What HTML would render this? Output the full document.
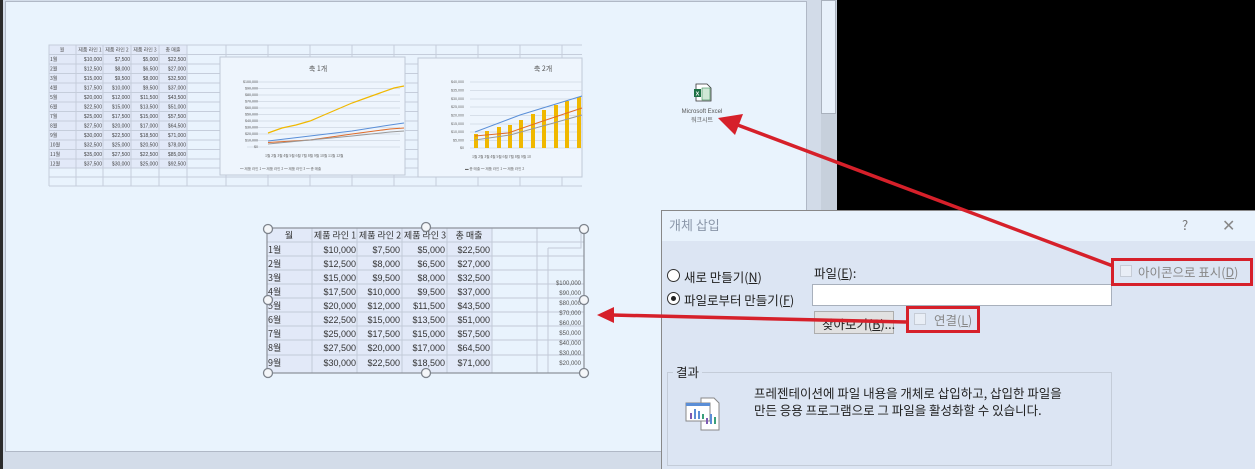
<!DOCTYPE html>
<html><head><meta charset="utf-8">
<style>
*{margin:0;padding:0;box-sizing:border-box}
body{width:1255px;height:469px;overflow:hidden;background:#d3dce9;position:relative;font-family:"Liberation Sans","Noto Sans CJK KR",sans-serif}
.a{position:absolute}
.t{font-family:"Noto Sans CJK KR","Liberation Sans",sans-serif;color:#222;font-size:12.5px;white-space:nowrap}
</style></head><body>
<div class="a" style="left:0;top:0;width:3px;height:469px;background:#2b2b2b"></div>
<div class="a" style="left:5px;top:1px;width:802px;height:451px;background:#e9f3fd;border:1px solid #b0b8c6"></div>
<div class="a" style="left:807px;top:0;width:14px;height:452px;background:#d2dbe8"></div>
<div class="a" style="left:821px;top:0;width:16px;height:210px;background:#c7d0dc"></div>
<div class="a" style="left:821px;top:0;width:15px;height:114px;background:#e8f1fb;border:1px solid #a9b1bd"></div>
<div class="a" style="left:837px;top:0;width:418px;height:210px;background:#000"></div>

<svg class="a" style="left:0;top:0" width="1255" height="469" font-family="Liberation Sans,Noto Sans CJK KR,sans-serif">
<g stroke="#c5cddb" stroke-width="1" fill="none">
<rect x="49" y="45" width="138" height="123" fill="#e2e9f8"/>
<path d="M49 45H582M49 54.5H582M49 64H582M49 73.5H582M49 83H582M49 92.5H582M49 102H582M49 111.5H582M49 121H582M49 130.5H582M49 140H582M49 149.5H582M49 159H582M49 168H582M49 177H582M49 186H582"/>
<path d="M49 45V186M76 45V186M103 45V186M131 45V186M159 45V186M187 45V186M226 45V186M268 45V186M310 45V186M352 45V186M394 45V186M436 45V186M478 45V186M520 45V186M562 45V186"/>
</g>
<g font-size="5" fill="#555" font-family="Noto Sans CJK KR,sans-serif">
<text x="62" y="51.5" text-anchor="middle">월</text><text x="90" y="51.5" text-anchor="middle">제품 라인 1</text><text x="117" y="51.5" text-anchor="middle">제품 라인 2</text><text x="145" y="51.5" text-anchor="middle">제품 라인 3</text><text x="173" y="51.5" text-anchor="middle">총 매출</text>
</g>
<g font-size="5" fill="#444" font-family="Noto Sans CJK KR,sans-serif">
<text x="50" y="61">1월</text><text x="50" y="70.5">2월</text><text x="50" y="80">3월</text><text x="50" y="89.5">4월</text><text x="50" y="99">5월</text><text x="50" y="108.5">6월</text><text x="50" y="118">7월</text><text x="50" y="127.5">8월</text><text x="50" y="137">9월</text><text x="50" y="146.5">10월</text><text x="50" y="156">11월</text><text x="50" y="165.5">12월</text>
</g>
<g font-size="5" fill="#444" text-anchor="end">
<text x="102" y="61">$10,000</text><text x="130" y="61">$7,500</text><text x="158" y="61">$5,000</text><text x="186" y="61">$22,500</text>
<text x="102" y="70.5">$12,500</text><text x="130" y="70.5">$8,000</text><text x="158" y="70.5">$6,500</text><text x="186" y="70.5">$27,000</text>
<text x="102" y="80">$15,000</text><text x="130" y="80">$9,500</text><text x="158" y="80">$8,000</text><text x="186" y="80">$32,500</text>
<text x="102" y="89.5">$17,500</text><text x="130" y="89.5">$10,000</text><text x="158" y="89.5">$9,500</text><text x="186" y="89.5">$37,000</text>
<text x="102" y="99">$20,000</text><text x="130" y="99">$12,000</text><text x="158" y="99">$11,500</text><text x="186" y="99">$43,500</text>
<text x="102" y="108.5">$22,500</text><text x="130" y="108.5">$15,000</text><text x="158" y="108.5">$13,500</text><text x="186" y="108.5">$51,000</text>
<text x="102" y="118">$25,000</text><text x="130" y="118">$17,500</text><text x="158" y="118">$15,000</text><text x="186" y="118">$57,500</text>
<text x="102" y="127.5">$27,500</text><text x="130" y="127.5">$20,000</text><text x="158" y="127.5">$17,000</text><text x="186" y="127.5">$64,500</text>
<text x="102" y="137">$30,000</text><text x="130" y="137">$22,500</text><text x="158" y="137">$18,500</text><text x="186" y="137">$71,000</text>
<text x="102" y="146.5">$32,500</text><text x="130" y="146.5">$25,000</text><text x="158" y="146.5">$20,500</text><text x="186" y="146.5">$78,000</text>
<text x="102" y="156">$35,000</text><text x="130" y="156">$27,500</text><text x="158" y="156">$22,500</text><text x="186" y="156">$85,000</text>
<text x="102" y="165.5">$37,500</text><text x="130" y="165.5">$30,000</text><text x="158" y="165.5">$25,000</text><text x="186" y="165.5">$92,500</text>
</g>
<rect x="220" y="57" width="185" height="118" fill="#eef5fd" stroke="#c0c9d6"/>
<text x="318" y="71" font-size="7" fill="#555" text-anchor="middle" font-family="Noto Sans CJK KR,sans-serif">축 1개</text>
<g stroke="#d0d7e2" stroke-width="0.8"><path d="M247 82H400M247 88.5H400M247 95H400M247 101.5H400M247 108H400M247 114.5H400M247 121H400M247 127.5H400M247 134H400M247 140.5H400M247 147H400"/></g>
<g font-size="3.6" fill="#666" text-anchor="end"><text x="258" y="83">$100,000</text><text x="258" y="89.5">$90,000</text><text x="258" y="96">$80,000</text><text x="258" y="102.5">$70,000</text><text x="258" y="109">$60,000</text><text x="258" y="115.5">$50,000</text><text x="258" y="122">$40,000</text><text x="258" y="128.5">$30,000</text><text x="258" y="135">$20,000</text><text x="258" y="141.5">$10,000</text><text x="258" y="148">$0</text></g>
<polyline fill="none" stroke="#f0b800" stroke-width="1.2" points="268,133 282,128 296,125 310,121 324,115 338,109 352,103 366,98 380,93 394,88 404,86"/>
<polyline fill="none" stroke="#5a8fd8" stroke-width="1" points="268,141 310,136 352,131 390,125 404,123"/>
<polyline fill="none" stroke="#e06c2a" stroke-width="1" points="268,142.5 310,140 352,134 390,129 404,128"/>
<polyline fill="none" stroke="#999" stroke-width="1" points="268,144 310,140 352,136 390,132 404,131"/>
<g font-size="3.6" fill="#666" font-family="Noto Sans CJK KR,sans-serif"><text x="265" y="157">1월 2월 3월 4월 5월 6월 7월 8월 9월 10월 11월 12월</text>
<text x="240" y="170">━ 제품 라인 1   ━ 제품 라인 2   ━ 제품 라인 3   ━ 총 매출</text></g>
<rect x="418" y="58" width="164" height="119" fill="#eef5fd" stroke="#c0c9d6"/>
<text x="543" y="71" font-size="7" fill="#555" text-anchor="middle" font-family="Noto Sans CJK KR,sans-serif">축 2개</text>
<g stroke="#d0d7e2" stroke-width="0.8"><path d="M470 82H582M470 90.5H582M470 99H582M470 107H582M470 115.5H582M470 124H582M470 132H582M470 140.5H582M470 148H582"/></g>
<g font-size="3.6" fill="#666" text-anchor="end"><text x="464" y="83">$40,000</text><text x="464" y="91.5">$35,000</text><text x="464" y="100">$30,000</text><text x="464" y="108">$25,000</text><text x="464" y="116.5">$20,000</text><text x="464" y="125">$15,000</text><text x="464" y="133">$10,000</text><text x="464" y="141.5">$5,000</text><text x="464" y="149">$0</text></g>
<g fill="#f0b800"><rect x="474" y="134" width="4" height="14"/><rect x="485" y="131" width="4" height="17"/><rect x="497" y="127" width="4" height="21"/><rect x="508" y="125" width="4" height="23"/><rect x="519" y="120" width="4" height="28"/><rect x="531" y="114" width="4" height="34"/><rect x="542" y="110" width="4" height="38"/><rect x="554" y="105" width="4" height="43"/><rect x="565" y="101" width="4" height="47"/><rect x="577" y="97" width="4" height="51"/></g>
<polyline fill="none" stroke="#5a8fd8" stroke-width="1" points="475,132 520,115 582,96"/>
<polyline fill="none" stroke="#e06c2a" stroke-width="1" points="475,136 508,133 540,122 582,108"/>
<polyline fill="none" stroke="#999" stroke-width="1" points="475,140 510,135 550,124 582,115"/>
<g font-size="3.6" fill="#666" font-family="Noto Sans CJK KR,sans-serif"><text x="472" y="158">1월 2월 3월 4월 5월 6월 7월 8월 9월 10</text>
<text x="465" y="170">▬ 총 매출   ━ 제품 라인 1   ━ 제품 라인 2</text></g>

<path d="M696 84H707L711 88V101H696Z" fill="#fff" stroke="#333" stroke-width="0.8"/>
<rect x="702" y="88" width="8" height="12" fill="#cfe8d6" stroke="#3b8b55" stroke-width="0.6"/>
<rect x="694" y="89" width="7" height="8" fill="#1e7145"/>
<text x="697.5" y="95.5" font-size="5.5" fill="#fff" text-anchor="middle" font-weight="bold">X</text>
<text x="702" y="113" font-size="6" fill="#555" text-anchor="middle">Microsoft Excel</text>
<text x="702" y="122" font-size="6" fill="#555" text-anchor="middle" font-family="Noto Sans CJK KR,sans-serif">워크시트</text>

<rect x="267" y="228" width="225" height="145" fill="#e2e9f8"/>
<g stroke="#c2cad8" stroke-width="1" fill="none">
<path d="M267 242H584M267 256H584M267 270H584M267 284H584M267 298H584M267 312H584M267 326H584M267 340H584M267 355H584"/>
<path d="M312 228V373M357 228V373M402 228V373M447 228V373M492 228V373M537 228V373M548 248V373M548 248H581V228"/>
</g>
<rect x="267" y="228" width="317" height="145" fill="none" stroke="#8a8f98" stroke-width="1.2"/>
<g font-size="9" fill="#333" font-family="Noto Sans CJK KR,sans-serif"><text x="289" y="238.5" text-anchor="middle">월</text><text x="335" y="238.5" text-anchor="middle">제품 라인 1</text><text x="380" y="238.5" text-anchor="middle">제품 라인 2</text><text x="425" y="238.5" text-anchor="middle">제품 라인 3</text><text x="469" y="238.5" text-anchor="middle">총 매출</text>
<text x="268" y="253">1월</text><text x="268" y="267">2월</text><text x="268" y="281">3월</text><text x="268" y="295">4월</text><text x="268" y="309">5월</text><text x="268" y="323">6월</text><text x="268" y="337">7월</text><text x="268" y="351">8월</text><text x="268" y="366">9월</text></g>
<g font-size="9" fill="#333" text-anchor="end">
<text x="356" y="253">$10,000</text><text x="400" y="253">$7,500</text><text x="445" y="253">$5,000</text><text x="490" y="253">$22,500</text>
<text x="356" y="267">$12,500</text><text x="400" y="267">$8,000</text><text x="445" y="267">$6,500</text><text x="490" y="267">$27,000</text>
<text x="356" y="281">$15,000</text><text x="400" y="281">$9,500</text><text x="445" y="281">$8,000</text><text x="490" y="281">$32,500</text>
<text x="356" y="295">$17,500</text><text x="400" y="295">$10,000</text><text x="445" y="295">$9,500</text><text x="490" y="295">$37,000</text>
<text x="356" y="309">$20,000</text><text x="400" y="309">$12,000</text><text x="445" y="309">$11,500</text><text x="490" y="309">$43,500</text>
<text x="356" y="323">$22,500</text><text x="400" y="323">$15,000</text><text x="445" y="323">$13,500</text><text x="490" y="323">$51,000</text>
<text x="356" y="337">$25,000</text><text x="400" y="337">$17,500</text><text x="445" y="337">$15,000</text><text x="490" y="337">$57,500</text>
<text x="356" y="351">$27,500</text><text x="400" y="351">$20,000</text><text x="445" y="351">$17,000</text><text x="490" y="351">$64,500</text>
<text x="356" y="366">$30,000</text><text x="400" y="366">$22,500</text><text x="445" y="366">$18,500</text><text x="490" y="366">$71,000</text>
</g>
<g font-size="6" fill="#555" text-anchor="end"><text x="581" y="285">$100,000</text><text x="581" y="295">$90,000</text><text x="581" y="305">$80,000</text><text x="581" y="315">$70,000</text><text x="581" y="325">$60,000</text><text x="581" y="335">$50,000</text><text x="581" y="345">$40,000</text><text x="581" y="355">$30,000</text><text x="581" y="365">$20,000</text></g>
<g fill="#f4f6f9" stroke="#7d838c" stroke-width="1.3">
<circle cx="268" cy="229" r="4.5"/><circle cx="426" cy="227" r="4.5"/><circle cx="584" cy="229" r="4.5"/>
<circle cx="268" cy="300" r="4.5"/><circle cx="584" cy="300" r="4.5"/>
<circle cx="268" cy="373" r="4.5"/><circle cx="426" cy="373" r="4.5"/><circle cx="584" cy="373" r="4.5"/>
</g>
</svg>

<div class="a" style="left:661px;top:210px;width:594px;height:259px;background:#dce5f3;border-left:1px solid #888;border-top:1px solid #888"></div>
<div class="a" style="left:662px;top:211px;width:593px;height:30px;background:#e8f2fc"></div>
<div class="a t" style="left:669px;top:215px;color:#8a96a8;font-size:13px">개체 삽입</div>
<div class="a t" style="left:1182px;top:215px;color:#777;font-size:13px">?</div>
<div class="a t" style="left:1222px;top:212px;color:#888;font-size:16px;font-weight:300">✕</div>
<div class="a" style="left:667px;top:269px;width:13px;height:13px;border:1px solid #333;border-radius:50%;background:#fff"></div>
<div class="a t" style="left:684px;top:267px">새로 만들기(<u>N</u>)</div>
<div class="a" style="left:667px;top:292px;width:13px;height:13px;border:1px solid #333;border-radius:50%;background:#fff"></div>
<div class="a" style="left:671px;top:296px;width:5px;height:5px;border-radius:50%;background:#222"></div>
<div class="a t" style="left:684px;top:290px">파일로부터 만들기(<u>F</u>)</div>
<div class="a t" style="left:814px;top:263px">파일(<u>E</u>):</div>
<div class="a" style="left:812px;top:284px;width:300px;height:22px;background:#fff;border:1px solid #a8b0bc"></div>
<div class="a" style="left:814px;top:311px;width:80px;height:23px;background:#e1e1e1;border:1px solid #adadad"></div>
<div class="a t" style="left:822px;top:314px">찾아보기(<u>B</u>)...</div>
<div class="a" style="left:906px;top:306px;width:74px;height:27px;border:3px solid #d6202a;background:#dce5f3"></div>
<div class="a" style="left:914px;top:313px;width:12px;height:12px;border:1px solid #c6ccd6;background:#e9eef6"></div>
<div class="a t" style="left:934px;top:310px;color:#888">연결(<u>L</u>)</div>
<div class="a" style="left:1111px;top:258px;width:142px;height:28px;border:3px solid #d6202a;background:#dce5f3"></div>
<div class="a" style="left:1120px;top:265px;width:12px;height:12px;border:1px solid #c6ccd6;background:#e9eef6"></div>
<div class="a t" style="left:1138px;top:262px;color:#888">아이콘으로 표시(<u>D</u>)</div>
<div class="a" style="left:667px;top:372px;width:445px;height:94px;border:1px solid #c4ccd8"></div>
<div class="a t" style="left:673px;top:362px;background:#dce5f3;padding:0 3px">결과</div>
<div class="a t" style="left:754px;top:384px;line-height:17px">프레젠테이션에 파일 내용을 개체로 삽입하고, 삽입한 파일을<br>만든 응용 프로그램으로 그 파일을 활성화할 수 있습니다.</div>
<svg class="a" style="left:684px;top:396px" width="42" height="40">
<path d="M17 2H30L35 7V34H17Z" fill="#fff" stroke="#888"/>
<rect x="2" y="7" width="24" height="18" fill="#fff" stroke="#888"/>
<rect x="2" y="7" width="24" height="3" fill="#5b8ed6"/>
<rect x="6" y="17" width="2" height="6" fill="#7e5bb3"/><rect x="10" y="13" width="2" height="10" fill="#5b8ed6"/><rect x="14" y="15" width="2" height="8" fill="#5b8ed6"/><rect x="18" y="18" width="2" height="5" fill="#3aa07a"/>
<rect x="22" y="22" width="2" height="6" fill="#7e5bb3"/><rect x="26" y="18" width="2" height="10" fill="#5b8ed6"/><rect x="30" y="21" width="2" height="7" fill="#3aa07a"/>
</svg>

<svg class="a" style="left:0;top:0" width="1255" height="469">
<g stroke="#d6202a" stroke-width="3.5" fill="#d6202a">
<line x1="1113" y1="266" x2="735" y2="124"/>
<line x1="906" y1="322" x2="612" y2="315"/>
</g>
<polygon points="718,118 743,114 735,135" fill="#d6202a"/>
<polygon points="597,315 614,307 614,323" fill="#d6202a"/>
</svg>
</body></html>
